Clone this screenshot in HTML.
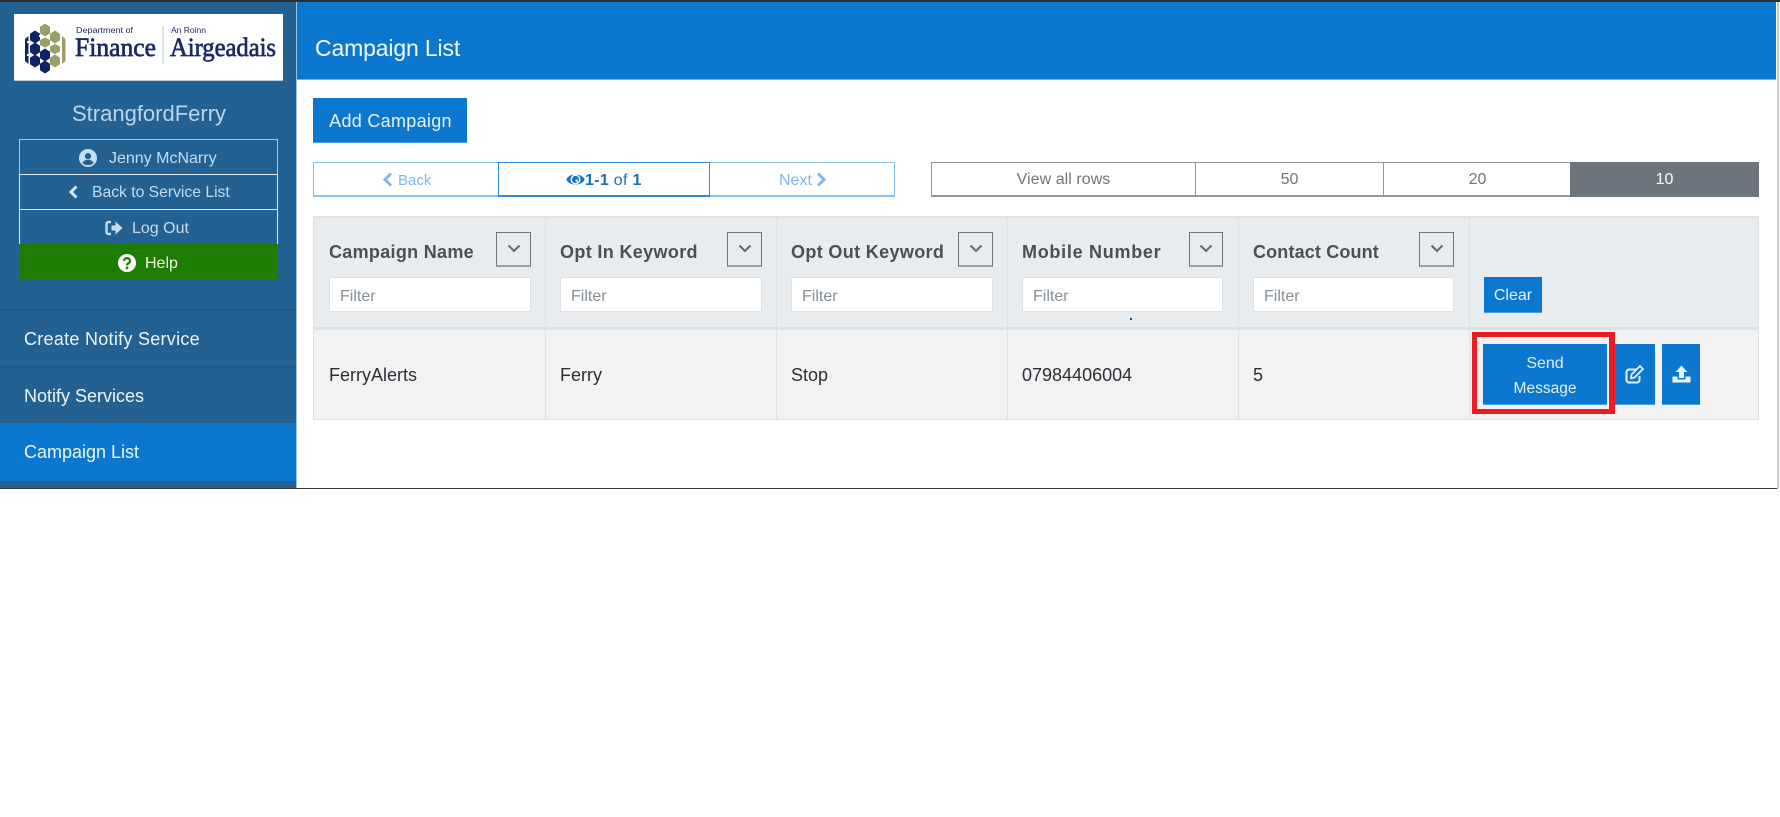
<!DOCTYPE html>
<html lang="en">
<head>
<meta charset="utf-8">
<title>Campaign List</title>
<style>
html,body{margin:0;padding:0;background:#fff;}
body{width:1780px;height:817px;overflow:hidden;position:relative;font-family:"Liberation Sans",Arial,sans-serif;}
div,span,svg{position:absolute;box-sizing:border-box;}
.t{white-space:nowrap;}
.c{display:flex;align-items:center;justify-content:center;white-space:nowrap;}
.side{left:19px;width:259px;border:1px solid #a9c6dd;border-bottom:0;color:#c6dcef;font-size:16px;}
.nav{left:0;width:296px;height:57px;line-height:57px;padding-left:24px;color:#eef5fb;font-size:18px;border-top:2px solid #1f5884;white-space:nowrap;}
.pg{top:162px;height:35px;border:1px solid #8cc0ec;border-bottom-width:2px;font-size:16px;color:#7fb8ea;}
.rw{top:162px;height:35px;border:1px solid #8f969c;border-bottom-width:2px;font-size:16px;color:#6c757d;padding-top:2px;}
.th{top:252px;height:0;line-height:0;font-weight:bold;font-size:18px;color:#495057;white-space:nowrap;}
.dd{top:232px;height:35px;background:#e9ecef;border:1px solid #6c757d;border-bottom-width:2px;border-bottom-color:#9aa0a6;}
.fi{top:277px;height:35px;background:#fff;border:1px solid #dee2e6;color:#868e96;font-size:16px;line-height:38px;padding-left:10px;}
.td{top:375px;height:0;line-height:0;font-size:18px;color:#2b3036;white-space:nowrap;}
.vl{width:1px;background:#dee2e6;top:218px;height:202px;}
.btn{background:#0b77cf;color:#e9f3fb;border-bottom:1px solid #4c9ede;}
</style>
</head>
<body>

<!-- sidebar -->
<div style="left:0;top:0;width:296px;height:488px;background:#236192;"></div>
<div style="left:296px;top:2px;width:1px;height:486px;background:#9cc3e2;"></div>

<!-- logo -->
<div style="left:14px;top:14px;width:269px;height:67px;background:#fff;border-bottom:1px solid #b9cfe0;"></div>
<svg style="left:14px;top:14px;" width="269" height="67" viewBox="0 0 269 67">
  <g fill="#989f6b">
    <polygon transform="translate(31 16)" points="0,-6.500 5,-3.200 5,3.200 0,6.500 -5,3.200 -5,-3.200"/>
    <polygon transform="translate(41 23)" points="0,-6.500 5,-3.200 5,3.200 0,6.500 -5,3.200 -5,-3.200"/>
    <polygon transform="translate(31 28.500)" points="0,-5 5,-2.500 5,2.500 0,5 -5,2.500 -5,-2.500"/>
    <polygon transform="translate(41 35)" points="0,-5 5,-2.500 5,2.500 0,5 -5,2.500 -5,-2.500"/>
    <polygon transform="translate(41 47)" points="0,-6.500 5,-3.200 5,3.200 0,6.500 -5,3.200 -5,-3.200"/>
    <polygon points="48,22 51.500,25 51.500,47 48,50"/>
  </g>
  <g fill="#0f2466">
    <polygon transform="translate(21 23)" points="0,-6.500 5,-3.200 5,3.200 0,6.500 -5,3.200 -5,-3.200"/>
    <polygon transform="translate(21 35)" points="0,-6.500 5,-3.200 5,3.200 0,6.500 -5,3.200 -5,-3.200"/>
    <polygon transform="translate(31 41)" points="0,-6.500 5,-3.200 5,3.200 0,6.500 -5,3.200 -5,-3.200"/>
    <polygon transform="translate(21 47)" points="0,-6.500 5,-3.200 5,3.200 0,6.500 -5,3.200 -5,-3.200"/>
    <polygon transform="translate(31 53)" points="0,-6.500 5,-3.200 5,3.200 0,6.500 -5,3.200 -5,-3.200"/>
    <polygon points="14.500,22 11,25 11,47 14.500,50"/>
  </g>
  <g fill="#fff">
    <rect x="13" y="27" width="3" height="2"/>
    <rect x="13" y="40" width="3" height="2"/>
    <rect x="25" y="21" width="2" height="2"/>
    <rect x="36" y="27" width="2" height="2"/>
    <rect x="45" y="29" width="2" height="2"/>
    <rect x="45" y="40" width="2" height="2"/>
  </g>
  <text x="62" y="19" font-family="Liberation Sans" font-size="8.5" fill="#1b2a63" textLength="57" lengthAdjust="spacingAndGlyphs">Department of</text>
  <text x="61" y="42" font-family="Liberation Serif" font-size="26" fill="#1b2a63" stroke="#1b2a63" stroke-width=".7" textLength="81" lengthAdjust="spacingAndGlyphs">Finance</text>
  <rect x="148.500" y="12" width="1" height="38" fill="#c3c8cf"/>
  <text x="157" y="19" font-family="Liberation Sans" font-size="8.5" fill="#1b2a63" textLength="35" lengthAdjust="spacingAndGlyphs">An Roinn</text>
  <text x="156" y="42" font-family="Liberation Serif" font-size="26" fill="#1b2a63" stroke="#1b2a63" stroke-width=".7" textLength="106" lengthAdjust="spacingAndGlyphs">Airgeadais</text>
</svg>

<div class="t" style="left:72px;top:114px;height:0;line-height:0;font-size:22px;color:#bcd5ea;">StrangfordFerry</div>

<div class="side" style="top:139px;height:35px;"></div>
<div class="side" style="top:174px;height:35px;border-color:#dfeaf3;"></div>
<div class="side" style="top:209px;height:35px;border-color:#dfeaf3;"></div>
<svg style="left:79px;top:149px;" width="18" height="18" viewBox="0 0 24 24"><circle cx="12" cy="12" r="12" fill="#c6dcef"/><circle cx="12" cy="9.500" r="4.200" fill="#236192"/><path d="M4.500 18.500c1.500-3 4-4 7.500-4s6 1 7.500 4c-2 2-4.500 3-7.500 3s-5.500-1-7.500-3z" fill="#236192"/></svg>
<div class="t" style="left:109px;top:159px;height:0;line-height:0;font-size:16px;color:#c6dcef;">Jenny McNarry</div>
<svg style="left:68px;top:185px;" width="11" height="14" viewBox="0 0 11 14"><path d="M8.500 1.500L3 7l5.500 5.500" fill="none" stroke="#d5e5f2" stroke-width="3"/></svg>
<div class="t" style="left:92px;top:193px;height:0;line-height:0;font-size:15.700px;color:#c6dcef;">Back to Service List</div>
<svg style="left:105px;top:220px;" width="18" height="16" viewBox="0 0 18 16"><path d="M6 2H3.500A2 2 0 0 0 1.500 4v8a2 2 0 0 0 2 2H6" fill="none" stroke="#c6dcef" stroke-width="2.400"/><path d="M6.500 5.500H10.500V1.500L17.500 8l-7 6.500v-4h-4z" fill="#c6dcef"/></svg>
<div class="t" style="left:132px;top:229px;height:0;line-height:0;font-size:16px;color:#c6dcef;">Log Out</div>
<div style="left:19px;top:244px;width:259px;height:36px;background:#1e7d00;"></div>
<svg style="left:118px;top:254px;" width="18" height="18" viewBox="0 0 24 24"><circle cx="12" cy="12" r="12" fill="#fff"/><path d="M8 9.200a4 3.700 0 1 1 6 3.200c-1.300.7-2 1.400-2 2.800" fill="none" stroke="#1e7d00" stroke-width="3"/><rect x="10.300" y="16.800" width="3.400" height="3.400" fill="#1e7d00"/></svg>
<div class="t" style="left:145px;top:264px;height:0;line-height:0;font-size:16px;color:#f3f8e8;">Help</div>

<div class="nav" style="top:309px;letter-spacing:.28px;">Create Notify Service</div>
<div class="nav" style="top:366px;">Notify Services</div>
<div class="nav" style="top:423px;height:58px;background:#0b77cf;border-top:0;line-height:58px;">Campaign List</div>

<!-- header -->
<div style="left:297px;top:2px;width:1479px;height:77px;background:#0b77cf;"></div>
<div style="left:297px;top:79px;width:1479px;height:1px;background:#6db1e6;"></div>
<div class="t" style="left:315px;top:48px;height:0;line-height:0;font-size:23px;color:#f4f9fd;letter-spacing:-.15px;">Campaign List</div>

<!-- add -->
<div class="btn c" style="left:313px;top:98px;width:154px;height:45px;font-size:18px;letter-spacing:.3px;padding-top:2px;padding-left:1px;">Add Campaign</div>

<!-- pager -->
<div class="pg" style="left:313px;width:186px;"></div>
<div class="pg" style="left:709px;width:186px;"></div>
<div class="pg" style="left:498px;width:212px;border-color:#2f8bd9;"></div>
<svg style="left:382px;top:172px;" width="11" height="15" viewBox="0 0 11 15"><path d="M9 1.500L3 7.500l6 6" fill="none" stroke="#7fb8ea" stroke-width="3"/></svg>
<div class="t" style="left:398px;top:181px;height:0;line-height:0;font-size:15px;color:#7fb8ea;">Back</div>
<svg style="left:566px;top:172px;" width="19" height="15" viewBox="0 0 19 15"><path d="M0.300 7.500C3 0.800 16 0.800 18.700 7.500 16 14.200 3 14.200 0.300 7.500z" fill="#1a73c0"/><circle cx="9.500" cy="7.500" r="5" fill="#fff"/><circle cx="9.500" cy="7.500" r="3.600" fill="#1a73c0"/><circle cx="10.800" cy="8.800" r="1.400" fill="#cfe4f6"/></svg>
<div class="t" style="left:585px;top:181px;height:0;line-height:0;font-size:16px;color:#1a6fb8;letter-spacing:.3px;"><b>1-1</b> of <b>1</b></div>
<div class="t" style="left:779px;top:181px;height:0;line-height:0;font-size:16px;color:#7fb8ea;">Next</div>
<svg style="left:816px;top:172px;" width="11" height="15" viewBox="0 0 11 15"><path d="M2 1.500L8 7.500l-6 6" fill="none" stroke="#7fb8ea" stroke-width="3"/></svg>

<!-- rows -->
<div class="rw c" style="left:931px;width:265px;letter-spacing:.05px;">View all rows</div>
<div class="rw c" style="left:1195px;width:189px;">50</div>
<div class="rw c" style="left:1383px;width:188px;border-right:0;">20</div>
<div class="c" style="left:1570px;top:162px;width:189px;height:35px;background:#6c757d;color:#fff;font-size:16px;padding-top:1px;">10</div>

<!-- table -->
<div style="left:313px;top:216px;width:1446px;height:114px;background:#e9ecef;border-top:2px solid #dee2e6;border-bottom:3px solid #dee2e6;border-left:1px solid #dee2e6;border-right:1px solid #dee2e6;"></div>
<div style="left:313px;top:330px;width:1446px;height:90px;background:#f2f2f2;border-bottom:1px solid #dee2e6;border-left:1px solid #dee2e6;border-right:1px solid #dee2e6;"></div>
<div class="vl" style="left:545px;"></div>
<div class="vl" style="left:776px;"></div>
<div class="vl" style="left:1007px;"></div>
<div class="vl" style="left:1238px;"></div>
<div class="vl" style="left:1469px;"></div>

<div class="th" style="left:329px;letter-spacing:.3px;">Campaign Name</div>
<div class="th" style="left:560px;letter-spacing:.35px;">Opt In Keyword</div>
<div class="th" style="left:791px;letter-spacing:.35px;">Opt Out Keyword</div>
<div class="th" style="left:1022px;letter-spacing:.72px;">Mobile Number</div>
<div class="th" style="left:1253px;letter-spacing:.15px;">Contact Count</div>

<div class="dd" style="left:496px;width:35px;"></div>
<div class="dd" style="left:727px;width:35px;"></div>
<div class="dd" style="left:958px;width:35px;"></div>
<div class="dd" style="left:1189px;width:34px;"></div>
<div class="dd" style="left:1419px;width:35px;"></div>
<svg style="left:507px;top:244px;" width="14" height="10" viewBox="0 0 14 10"><path d="M1.500 1.500L7 7l5.500-5.500" fill="none" stroke="#5f6971" stroke-width="2"/></svg>
<svg style="left:738px;top:244px;" width="14" height="10" viewBox="0 0 14 10"><path d="M1.500 1.500L7 7l5.500-5.500" fill="none" stroke="#5f6971" stroke-width="2"/></svg>
<svg style="left:969px;top:244px;" width="14" height="10" viewBox="0 0 14 10"><path d="M1.500 1.500L7 7l5.500-5.500" fill="none" stroke="#5f6971" stroke-width="2"/></svg>
<svg style="left:1199px;top:244px;" width="14" height="10" viewBox="0 0 14 10"><path d="M1.500 1.500L7 7l5.500-5.500" fill="none" stroke="#5f6971" stroke-width="2"/></svg>
<svg style="left:1430px;top:244px;" width="14" height="10" viewBox="0 0 14 10"><path d="M1.500 1.500L7 7l5.500-5.500" fill="none" stroke="#5f6971" stroke-width="2"/></svg>

<div class="fi" style="left:329px;width:202px;">Filter</div>
<div class="fi" style="left:560px;width:202px;">Filter</div>
<div class="fi" style="left:791px;width:202px;">Filter</div>
<div class="fi" style="left:1022px;width:201px;">Filter</div>
<div class="fi" style="left:1253px;width:201px;">Filter</div>
<div style="left:1130px;top:318px;width:2px;height:2px;background:#2a35d8;"></div>

<div class="btn c" style="left:1484px;top:277px;width:58px;height:36px;font-size:16px;padding-top:2px;">Clear</div>

<div class="td" style="left:329px;">FerryAlerts</div>
<div class="td" style="left:560px;">Ferry</div>
<div class="td" style="left:791px;">Stop</div>
<div class="td" style="left:1022px;">07984406004</div>
<div class="td" style="left:1253px;">5</div>

<!-- actions -->
<div style="left:1472px;top:332px;width:143px;height:82px;border:5px solid #ed1c24;border-right-width:6px;"></div>
<div class="btn" style="left:1483px;top:344px;width:124px;height:61px;"></div>
<div class="t" style="left:1483px;width:124px;top:364px;height:0;line-height:0;text-align:center;font-size:16px;color:#e3f0fa;">Send</div>
<div class="t" style="left:1483px;width:124px;top:389px;height:0;line-height:0;text-align:center;font-size:15.500px;color:#e3f0fa;">Message</div>
<div class="btn" style="left:1615px;top:344px;width:40px;height:61px;"></div>
<svg style="left:1625px;top:365px;" width="20" height="19" viewBox="0 0 20 19"><path d="M12 4.500H4A2.500 2.500 0 0 0 1.500 7v8A2.500 2.500 0 0 0 4 17.500h8a2.500 2.500 0 0 0 2.500-2.500v-4" fill="none" stroke="#e3f0fa" stroke-width="2"/><path d="M6.500 9.500L15 1l3 3-8.500 8.500-3.500.7z" fill="none" stroke="#e3f0fa" stroke-width="1.800"/></svg>
<div class="btn" style="left:1662px;top:344px;width:38px;height:61px;"></div>
<svg style="left:1672px;top:365px;" width="19" height="18" viewBox="0 0 19 18"><path d="M9.500 0.500L15.500 7H12v6H7V7H3.500z" fill="#f0f7fd"/><path d="M0.500 11.500H5.500v3h8v-3h5V17.500H0.500z" fill="#f0f7fd"/></svg>

<!-- chrome lines -->
<div style="left:0;top:0;width:1780px;height:2px;background:#2b2f33;"></div>
<div style="left:0;top:488px;width:1778px;height:1px;background:#33373b;"></div>
<div style="left:1777px;top:2px;width:2px;height:487px;background:#c9c9c9;"></div>

</body>
</html>
